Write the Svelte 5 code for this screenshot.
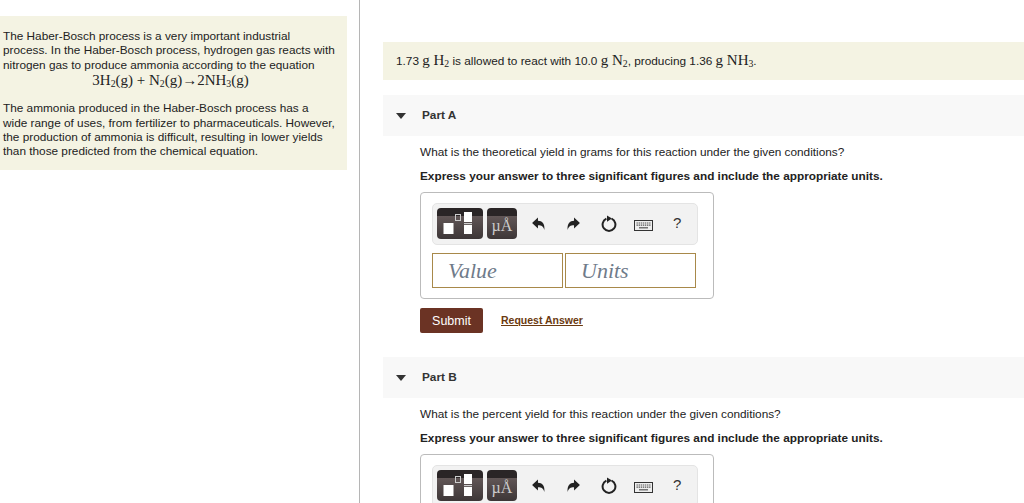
<script>
  const parts = [
    { name: "Part A", question: "What is the theoretical yield in grams for this reaction under the given conditions?", complete: true },
    { name: "Part B", question: "What is the percent yield for this reaction under the given conditions?", complete: false },
  ];
</script>

<div class="page">
  <aside class="side">
    <div class="intro">
      <p>The Haber-Bosch process is a very important industrial<br />process. In the Haber-Bosch process, hydrogen gas reacts with<br />nitrogen gas to produce ammonia according to the equation</p>
      <div class="equation">3H<sub>2</sub>(g) + N<sub>2</sub>(g)→2NH<sub>3</sub>(g)</div>
      <p class="second">The ammonia produced in the Haber-Bosch process has a<br />wide range of uses, from fertilizer to pharmaceuticals. However,<br />the production of ammonia is difficult, resulting in lower yields<br />than those predicted from the chemical equation.</p>
    </div>
  </aside>

  <main class="content">
    <div class="given">
      1.73 <span class="m">g H<sub>2</sub></span> is allowed to react with 10.0 <span class="m">g N<sub>2</sub></span>, producing 1.36 <span class="m">g NH<sub>3</sub></span>.
    </div>

    {#each parts as part}
      <section class="part">
        <div class="part-head">
          <span class="caret"></span>
          <h2>{part.name}</h2>
        </div>
        <div class="part-body">
          <p class="question">{part.question}</p>
          <p class="express">Express your answer to three significant figures and include the appropriate units.</p>

          <div class="answer">
            <div class="toolbar">
              <button class="tpl wide" aria-label="templates">
                <svg width="46" height="31" viewBox="0 0 46 31">
                  <rect x="6.5" y="15" width="10" height="11" fill="#fff" />
                  <rect x="18.5" y="6.5" width="5" height="6" fill="none" stroke="#ccc" stroke-width="1" />
                  <rect x="27" y="4" width="8" height="10" fill="#fff" />
                  <rect x="27" y="15" width="8" height="1.2" fill="#ccc" />
                  <rect x="27" y="17" width="8" height="9" fill="#fff" />
                </svg>
              </button>
              <button class="tpl narrow">µÅ</button>

              <svg class="ico undo" width="15" height="16" viewBox="0 0 14 14">
                <path d="M1 6 L6.5 1 V4 C10.5 4 13 6.5 12.5 12.5 C11.5 9.5 10 8.2 6.5 8.2 V11.2 Z" fill="#222" />
              </svg>
              <svg class="ico redo" width="15" height="16" viewBox="0 0 14 14">
                <path d="M13 6 L7.5 1 V4 C3.5 4 1 6.5 1.5 12.5 C2.5 9.5 4 8.2 7.5 8.2 V11.2 Z" fill="#222" />
              </svg>
              <svg class="ico reset" width="16" height="17" viewBox="0 0 16 17">
                <path d="M10.6 3.7 A6.4 6.4 0 1 1 5.4 3.7" fill="none" stroke="#222" stroke-width="2" />
                <path d="M6 0.4 L11 3.6 L6 6.8 Z" fill="#222" />
              </svg>
              <svg class="ico keys" width="19" height="11" viewBox="0 0 19 11">
                <rect x="0.5" y="0.5" width="18" height="10" fill="#eee" stroke="#333" />
                <path d="M2.5 3 H16.5 M2.5 5.2 H16.5" stroke="#555" stroke-width="1.2" stroke-dasharray="1.4 0.7" />
                <path d="M5 7.8 H14" stroke="#555" stroke-width="1.2" />
              </svg>
              <span class="help">?</span>
            </div>
            {#if part.complete}
              <div class="inputs">
                <div class="field">Value</div>
                <div class="field">Units</div>
              </div>
            {/if}
          </div>

          {#if part.complete}
            <div class="actions">
              <button class="submit">Submit</button>
              <a class="request" href="#request">Request Answer</a>
            </div>
          {/if}
        </div>
      </section>
    {/each}
  </main>
</div>

<style>
  :global(body) {
    margin: 0;
    background: #fff;
  }

  .page {
    display: flex;
    height: 503px;
    overflow: hidden;
    font-family: "Liberation Sans", Arial, sans-serif;
    color: #222;
    font-size: 11.8px;
  }

  /* Left column */
  .side {
    width: 359px;
    flex-shrink: 0;
    border-right: 1px solid #b5b5b5;
    padding-top: 16px;
    box-sizing: content-box;
  }

  .intro {
    width: 347px;
    height: 154px;
    box-sizing: border-box;
    background: #f4f3e3;
    padding: 13px 4px 0 3px;
    line-height: 14.4px;
    white-space: nowrap;
  }

  .intro p {
    margin: 0;
  }

  .intro .second {
    margin-top: 13px;
  }

  .equation {
    font-family: "Liberation Serif", "Times New Roman", serif;
    font-size: 15px;
    line-height: 16px;
    text-align: center;
    padding-right: 5px;
  }

  sub {
    font-size: 65%;
    line-height: 0;
    vertical-align: -2px;
  }

  /* Right column */
  .content {
    margin-left: 23px;
    flex: 1;
    min-width: 0;
    padding-top: 42px;
  }

  .given {
    height: 38px;
    box-sizing: border-box;
    background: #f4f3e3;
    padding-left: 13px;
    line-height: 37px;
  }

  .m {
    font-family: "Liberation Serif", "Times New Roman", serif;
    font-size: 15px;
  }

  .part {
    margin-top: 15px;
  }

  .part + .part {
    margin-top: 24px;
  }

  .part-head {
    height: 41px;
    background: #f8f8f8;
    display: flex;
    align-items: center;
    padding-left: 13px;
  }

  .caret {
    width: 0;
    height: 0;
    border-left: 5px solid transparent;
    border-right: 5px solid transparent;
    border-top: 6px solid #333;
    margin-right: 16px;
  }

  h2 {
    margin: 0 0 2px;
    font-size: 11.8px;
    font-weight: bold;
    color: #333;
  }

  .part-body {
    padding-left: 37px;
  }

  .question {
    margin: 9px 0 0;
    line-height: 14px;
  }

  .express {
    margin: 10px 0 0;
    line-height: 14px;
    font-weight: bold;
  }

  .answer {
    width: 294px;
    height: 107px;
    margin-top: 9px;
    box-sizing: border-box;
    border: 1px solid #bbb;
    border-radius: 4px;
    padding: 10px 0 0 11px;
  }

  .toolbar {
    width: 266px;
    height: 42px;
    box-sizing: border-box;
    background: #f2f2f2;
    border: 1px solid #e4e4e4;
    border-radius: 5px;
    display: flex;
    align-items: center;
    padding: 0 0 1px 4px;
  }

  .tpl {
    height: 31px;
    padding: 0;
    border: 0;
    border-radius: 4px;
    background: linear-gradient(#2a2526 0 8px, #615656 8px, #3d3637 100%);
    color: #ccc;
    font-family: "Liberation Serif", "Times New Roman", serif;
    font-size: 16px;
    display: flex;
    align-items: center;
    justify-content: center;
    overflow: hidden;
  }

  .wide {
    width: 46px;
  }

  .narrow {
    width: 30px;
    margin-left: 4px;
    padding-top: 4px;
  }

  .ico,
  .help {
    flex-shrink: 0;
  }

  .undo {
    margin-left: 14px;
  }

  .redo {
    margin-left: 20px;
  }

  .reset {
    margin-left: 20px;
  }

  .keys {
    margin-left: 17px;
    margin-top: 3px;
  }

  .help {
    margin-left: 20px;
    font-size: 15px;
    color: #333;
    padding-bottom: 2px;
  }

  .inputs {
    display: flex;
    gap: 2px;
    margin-top: 8px;
  }

  .field {
    width: 131px;
    height: 35px;
    box-sizing: border-box;
    border: 1px solid #a8894a;
    background: #fff;
    font-family: "Liberation Serif", "Times New Roman", serif;
    font-style: italic;
    font-size: 22px;
    line-height: 33px;
    color: #6f7b8a;
    padding-left: 15px;
  }

  .actions {
    display: flex;
    align-items: center;
    margin-top: 9px;
  }

  .submit {
    width: 63px;
    height: 25px;
    padding: 0;
    border: 0;
    border-radius: 2px;
    background: #6b3324;
    color: #fff;
    font-family: inherit;
    font-size: 12.5px;
  }

  .request {
    margin-left: 18px;
    margin-bottom: 2px;
    font-size: 10.5px;
    font-weight: bold;
    color: #6b3a10;
  }
</style>
